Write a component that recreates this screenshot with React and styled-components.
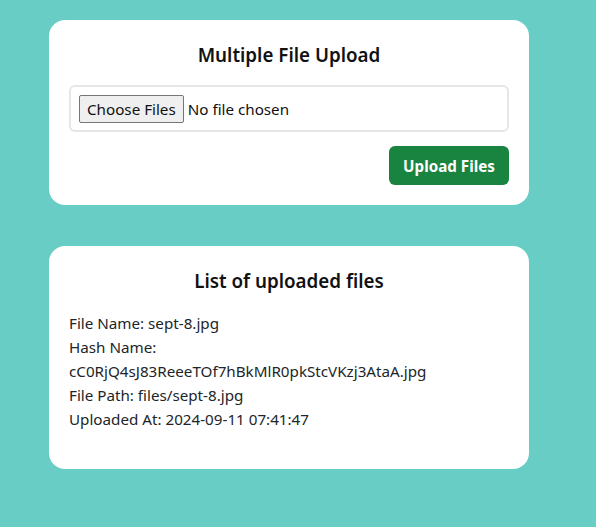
import React from 'react';
import styled, { createGlobalStyle } from 'styled-components';

const GlobalStyle = createGlobalStyle`
  * { box-sizing: border-box; }
  body {
    margin: 0;
    background: #68cdc4;
    font-family: "Noto Sans", "Open Sans", sans-serif;
    color: #212529;
  }
`;

const Page = styled.div`
  display: flex;
  flex-direction: column;
  gap: 41px;
  width: 480px;
  margin-left: 49px;
  padding: 20px 0 40px;
`;

const Card = styled.section`
  background: #fff;
  border-radius: 16px;
  padding: 20px 20px ${(p) => (p.$tall ? '38px' : '20px')};
  display: flex;
  flex-direction: column;
`;

const Title = styled.h2`
  margin: 0 0 15px;
  font-size: 18.8px;
  line-height: 30px;
  font-weight: 600;
  text-align: center;
  color: #111;
`;

const FileBox = styled.label`
  display: flex;
  align-items: center;
  gap: 4px;
  height: 47px;
  padding: 0 8px;
  border: 2px solid #e6e6e6;
  border-radius: 6px;
  font-size: 15.2px;
  color: #111;
  cursor: pointer;

  input { display: none; }
`;

const ChooseButton = styled.span`
  display: inline-flex;
  align-items: center;
  height: 28px;
  padding: 0 7px;
  background: #efefef;
  border: 1px solid #767676;
  border-radius: 2px;
  color: #111;
`;

const Actions = styled.div`
  display: flex;
  justify-content: flex-end;
  margin-top: 14px;
`;

const UploadButton = styled.button`
  height: 39px;
  width: 120px;
  border: none;
  border-radius: 6px;
  background: #198340;
  color: #fff;
  font-family: inherit;
  font-size: 15.2px;
  font-weight: 700;
  cursor: pointer;
`;

const Line = styled.div`
  font-size: 15.2px;
  line-height: 24px;
`;

const files = [
  {
    name: 'sept-8.jpg',
    hash: 'cC0RjQ4sJ83ReeeTOf7hBkMlR0pkStcVKzj3AtaA.jpg',
    path: 'files/sept-8.jpg',
    uploadedAt: '2024-09-11 07:41:47',
  },
];

export default function App() {
  return (
    <>
      <GlobalStyle />
      <Page>
        <Card>
          <Title>Multiple File Upload</Title>
          <FileBox>
            <input type="file" multiple />
            <ChooseButton>Choose Files</ChooseButton>
            <span>No file chosen</span>
          </FileBox>
          <Actions>
            <UploadButton type="button">Upload Files</UploadButton>
          </Actions>
        </Card>
        <Card $tall>
          <Title>List of uploaded files</Title>
          {files.map((file) => (
            <div key={file.hash}>
              <Line>File Name: {file.name}</Line>
              <Line>Hash Name:</Line>
              <Line>{file.hash}</Line>
              <Line>File Path: {file.path}</Line>
              <Line>Uploaded At: {file.uploadedAt}</Line>
            </div>
          ))}
        </Card>
      </Page>
    </>
  );
}
